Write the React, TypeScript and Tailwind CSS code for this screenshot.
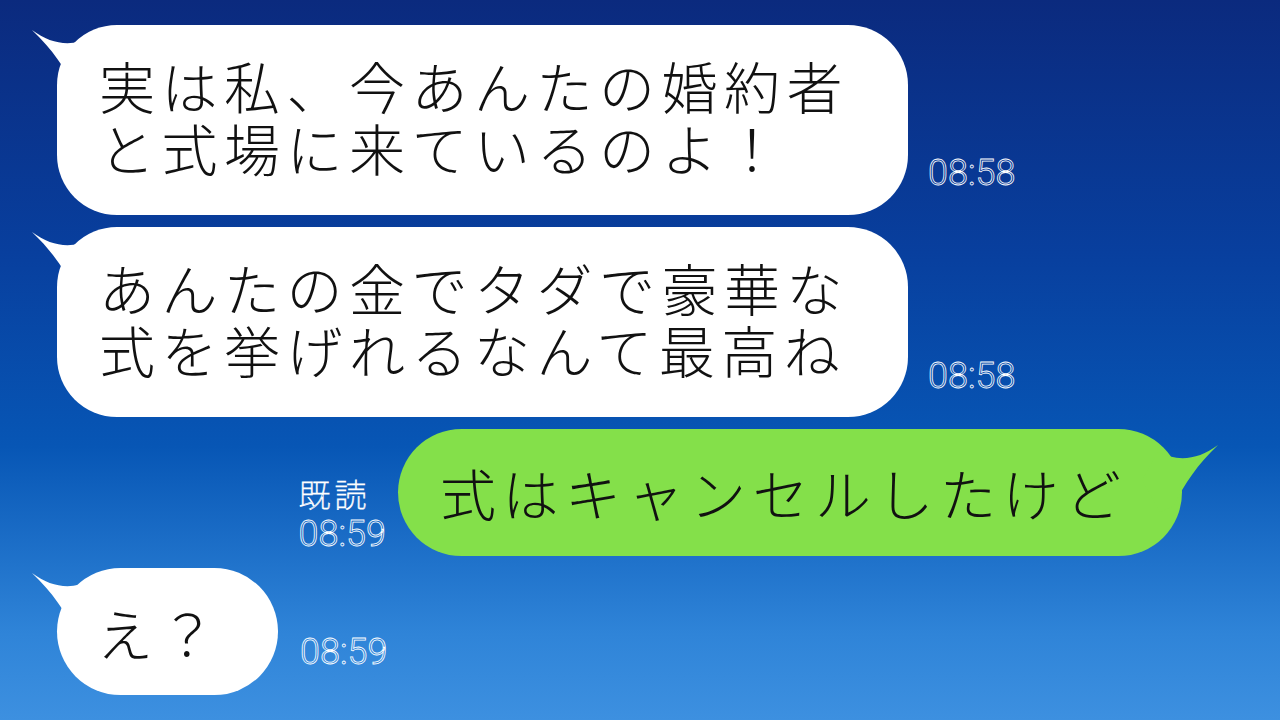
const jp = "font-['Noto_Sans_CJK_JP','Noto_Sans',sans-serif]";

function Tail({ fill, flip = false }: { fill: string; flip?: boolean }) {
  return (
    <svg
      width="80"
      height="80"
      viewBox="0 0 80 80"
      className={
        flip
          ? "absolute top-[11px] right-[-38px] -scale-x-100"
          : "absolute top-0 left-[-27px]"
      }
    >
      <path
        d="M2 5 C22 20 42 22 62 12 L78 40 L60 72 L46 66 C36 44 22 24 2 5 Z"
        fill={fill}
      />
    </svg>
  );
}

function Stamp({ children }: { children: React.ReactNode }) {
  return (
    <span className="block font-['Roboto',sans-serif] text-[36px] leading-none font-light text-transparent [-webkit-text-stroke:0.8px_#ffffff]">
      {children}
    </span>
  );
}

const msg = `${jp} relative text-[56px] leading-[62px] tracking-[6.5px] font-light text-[#111]`;

function Bubble({ lines, time, last }: { lines: [string, string]; time: string; last?: boolean }) {
  return (
    <div className="flex items-end">
      <div className="relative ml-[57px] flex h-[190px] w-[851px] flex-col justify-center rounded-[60px] bg-white pb-[8px] pl-[42px]">
        <Tail fill="#ffffff" />
        <p className={msg}>
          {lines[0]}
          <br />
          {lines[1]}
        </p>
      </div>
      <div className={`ml-[20px] ${last ? "mb-[23px]" : "mb-[24px]"}`}>
        <Stamp>{time}</Stamp>
      </div>
    </div>
  );
}

export default function App() {
  return (
    <div className="relative h-[720px] w-[1280px] overflow-hidden bg-[linear-gradient(180deg,#0b2a7e_0%,#083f9e_35%,#0756b5_62%,#2f84d8_88%,#3d90e0_100%)]">
      <div className="flex flex-col gap-[12px] pt-[25px]">
        <Bubble lines={["実は私、今あんたの婚約者", "と式場に来ているのよ！"]} time="08:58" />
        <Bubble lines={["あんたの金でタダで豪華な", "式を挙げれるなんて最高ね"]} time="08:58" last />

        {/* own message */}
        <div className="flex items-end justify-end pr-[98px]">
          <div className="mb-[4px] mr-[12px] flex flex-col gap-[5px]">
            <span className={`${jp} block text-[32px] leading-[36px] tracking-[4px] font-thin text-transparent [-webkit-text-stroke:0.8px_#ffffff]`}>
              既読
            </span>
            <Stamp>08:59</Stamp>
          </div>
          <div className="relative flex h-[127px] w-[784px] items-center rounded-full bg-[#84e04a] pb-[2px] pl-[42px]">
            <Tail fill="#84e04a" flip />
            <p className={msg}>式はキャンセルしたけど</p>
          </div>
        </div>

        <div className="flex items-end">
          <div className="relative ml-[57px] flex h-[127px] w-[221px] items-center rounded-full bg-white pl-[40px]">
            <Tail fill="#ffffff" />
            <p className={msg}>え？</p>
          </div>
          <div className="mb-[25px] ml-[22px]">
            <Stamp>08:59</Stamp>
          </div>
        </div>
      </div>
    </div>
  );
}
